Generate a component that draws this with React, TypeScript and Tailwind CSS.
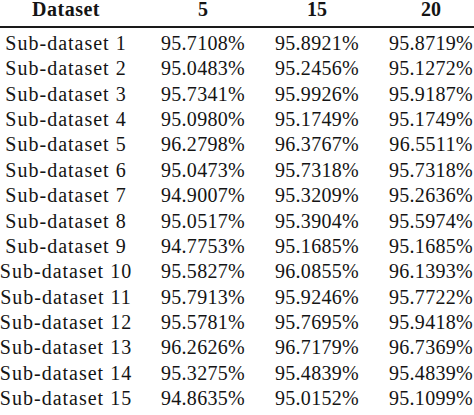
import React from "react";

const rows: [string, string, string, string][] = [
  ["Sub-dataset 1", "95.7108%", "95.8921%", "95.8719%"],
  ["Sub-dataset 2", "95.0483%", "95.2456%", "95.1272%"],
  ["Sub-dataset 3", "95.7341%", "95.9926%", "95.9187%"],
  ["Sub-dataset 4", "95.0980%", "95.1749%", "95.1749%"],
  ["Sub-dataset 5", "96.2798%", "96.3767%", "96.5511%"],
  ["Sub-dataset 6", "95.0473%", "95.7318%", "95.7318%"],
  ["Sub-dataset 7", "94.9007%", "95.3209%", "95.2636%"],
  ["Sub-dataset 8", "95.0517%", "95.3904%", "95.5974%"],
  ["Sub-dataset 9", "94.7753%", "95.1685%", "95.1685%"],
  ["Sub-dataset 10", "95.5827%", "96.0855%", "96.1393%"],
  ["Sub-dataset 11", "95.7913%", "95.9246%", "95.7722%"],
  ["Sub-dataset 12", "95.5781%", "95.7695%", "95.9418%"],
  ["Sub-dataset 13", "96.2626%", "96.7179%", "96.7369%"],
  ["Sub-dataset 14", "95.3275%", "95.4839%", "95.4839%"],
  ["Sub-dataset 15", "94.8635%", "95.0152%", "95.1099%"],
];

const Cell = ({ children, first }: { children: React.ReactNode; first?: boolean }) => (
  <div
    className={
      first
        ? "flex justify-center whitespace-nowrap tracking-[1px]"
        : "flex justify-center whitespace-nowrap tracking-[0.3px]"
    }
  >
    {children}
  </div>
);

export default function App() {
  return (
    <div
      className="w-[474px] h-[415px] overflow-hidden bg-white text-[#141414] text-[20px]"
      style={{ fontFamily: '"Liberation Serif", serif' }}
    >
      <div className="grid grid-cols-[132px_86px_86px_86px] gap-x-[28px] h-[26px] leading-[18.5px] font-bold items-start">
        <div className="flex justify-center whitespace-nowrap tracking-[0.5px]">Dataset</div>
        <div className="flex justify-center">5</div>
        <div className="flex justify-center">15</div>
        <div className="flex justify-center">20</div>
      </div>
      <div className="h-[2px] bg-[#1a1a1a]" />
      <div className="pt-[3px]">
        {rows.map((r) => (
          <div
            key={r[0]}
            className="grid grid-cols-[132px_86px_86px_86px] gap-x-[28px] h-[25.36px] leading-[25.36px]"
          >
            {r.map((c, i) => (
              <Cell key={i} first={i === 0}>
                {c}
              </Cell>
            ))}
          </div>
        ))}
      </div>
    </div>
  );
}
